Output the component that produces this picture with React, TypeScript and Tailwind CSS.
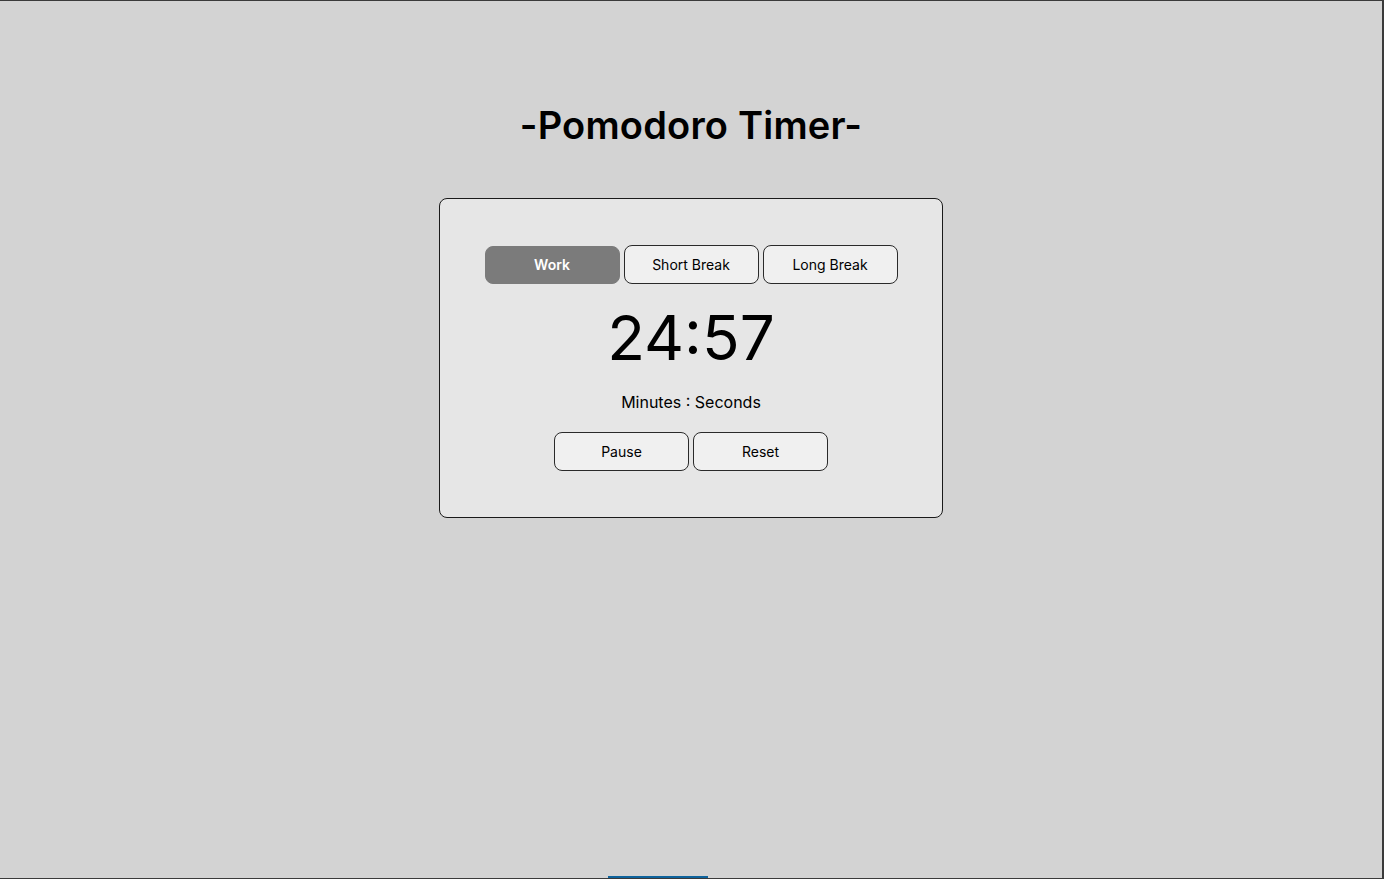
import React, { useState } from 'react';

type Mode = 'work' | 'short' | 'long';

const modes: { id: Mode; label: string }[] = [
  { id: 'work', label: 'Work' },
  { id: 'short', label: 'Short Break' },
  { id: 'long', label: 'Long Break' },
];

const font = { fontFamily: 'Inter, "Noto Sans", sans-serif' };

function TimerButton({
  label,
  active,
  onClick,
}: {
  label: string;
  active?: boolean;
  onClick?: () => void;
}) {
  return (
    <button
      onClick={onClick}
      className={
        active
          ? 'w-[135px] h-[38px] rounded-[8px] border border-[#7b7b7b] bg-[#7b7b7b] text-[14px] font-semibold text-white'
          : 'w-[135px] h-[39px] rounded-[8px] border border-[#2a2a2a] bg-[#f0f0f0] text-[14px] text-black'
      }
    >
      {label}
    </button>
  );
}

export default function App() {
  const [mode, setMode] = useState<Mode>('work');

  return (
    <div
      className="relative box-border h-[879px] w-full overflow-hidden border-t border-r-2 border-b border-[#3a3a3a] bg-[#d3d3d3]"
      style={font}
    >
      <div className="flex flex-col items-center">
        <h1 className="mt-[101px] text-[38px] font-semibold leading-[46px] tracking-[0.2px] text-black">
          -Pomodoro Timer-
        </h1>

        <div className="mt-[50px] box-border w-[504px] rounded-[8px] border border-[#1a1a1a] bg-[#e6e6e6] pt-[46px] pb-[46px]">
          <div className="flex items-center justify-center gap-[4px]">
            {modes.map((m) => (
              <TimerButton
                key={m.id}
                label={m.label}
                active={mode === m.id}
                onClick={() => setMode(m.id)}
              />
            ))}
          </div>

          <div className="mt-[18px] text-center text-[62px] leading-[72px] font-normal text-black">
            24:57
          </div>

          <p className="mt-[16px] text-center text-[16px] leading-[24px] text-black">
            Minutes : Seconds
          </p>

          <div className="mt-[18px] flex items-center justify-center gap-[4px]">
            <TimerButton label="Pause" />
            <TimerButton label="Reset" />
          </div>
        </div>
      </div>

      <div className="absolute bottom-0 left-[608px] h-[2px] w-[100px] bg-[#0e639c]" />
    </div>
  );
}
